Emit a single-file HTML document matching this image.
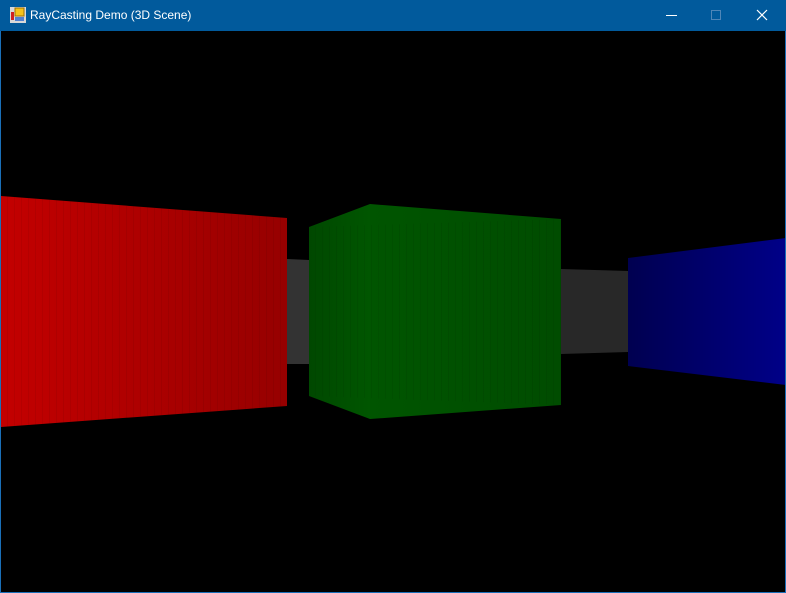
<!DOCTYPE html>
<html><head><meta charset="utf-8"><style>
html,body{margin:0;padding:0;width:786px;height:593px;overflow:hidden;background:#000}
.title{position:absolute;left:0;top:0;width:786px;height:31px;background:#015a9c}
.t{position:absolute;left:30px;top:8px;color:#fff;font:12px "Liberation Sans",sans-serif}
</style></head><body>
<div class="title">
<svg style="position:absolute;left:10px;top:7px" width="16" height="16">
<rect x="0" y="0" width="16" height="16" fill="#d8d8d8"/>
<rect x="5" y="1" width="9" height="8" fill="#f6c31a" stroke="#a07000" stroke-width="1"/>
<rect x="1" y="5" width="3" height="8" fill="#d02020"/>
<rect x="5" y="10" width="9" height="4" fill="#5080d0"/>
</svg>
<div class="t">RayCasting Demo (3D Scene)</div>
<svg style="position:absolute;left:660px;top:0" width="126" height="31">
<line x1="6" y1="15.5" x2="17" y2="15.5" stroke="#fff" stroke-width="1"/>
<rect x="51.5" y="10.5" width="9" height="9" fill="none" stroke="#4f86b8" stroke-width="1"/>
<path d="M97 10 L107 20 M107 10 L97 20" stroke="#fff" stroke-width="1.2"/>
</svg>
</div>
<svg style="position:absolute;left:0;top:0" width="786" height="593">
<defs>
<linearGradient id="r" x1="0" x2="1"><stop offset="0" stop-color="#c30000"/><stop offset="1" stop-color="#960000"/></linearGradient>
<linearGradient id="g1" x1="0" x2="1"><stop offset="0" stop-color="#004800"/><stop offset="1" stop-color="#005600"/></linearGradient>
<linearGradient id="g2" x1="0" x2="1"><stop offset="0" stop-color="#005500"/><stop offset="1" stop-color="#004c00"/></linearGradient>
<linearGradient id="b" x1="0" x2="1"><stop offset="0" stop-color="#000050"/><stop offset="1" stop-color="#000088"/></linearGradient>
<pattern id="st" width="7" height="10" patternUnits="userSpaceOnUse"><rect width="1" height="10" fill="rgba(0,0,0,0.06)"/></pattern>
</defs>
<rect x="0" y="31" width="786" height="562" fill="#000"/>
<polygon points="1,196 287,218 287,406 1,427" fill="url(#r)"/>
<polygon points="1,196 287,218 287,406 1,427" fill="url(#st)"/>
<polygon points="287,259 309,260 309,364 287,364" fill="#333"/>
<polygon points="309,227 370,204 370,419 309,396" fill="url(#g1)"/>
<polygon points="370,204 561,219 561,405 370,419" fill="url(#g2)"/>
<polygon points="309,227 561,219 561,405 309,396" fill="url(#st)"/>
<polygon points="561,269 628,271 628,352 561,354" fill="#282828"/>
<polygon points="628,258 786,238 786,385 628,366" fill="url(#b)"/>
<rect x="0" y="31" width="1" height="562" fill="#1a6fb8"/>
<rect x="785" y="31" width="1" height="562" fill="#1a6fb8"/>
<rect x="0" y="592" width="786" height="1" fill="#1a6fb8"/>
</svg>
</body></html>
